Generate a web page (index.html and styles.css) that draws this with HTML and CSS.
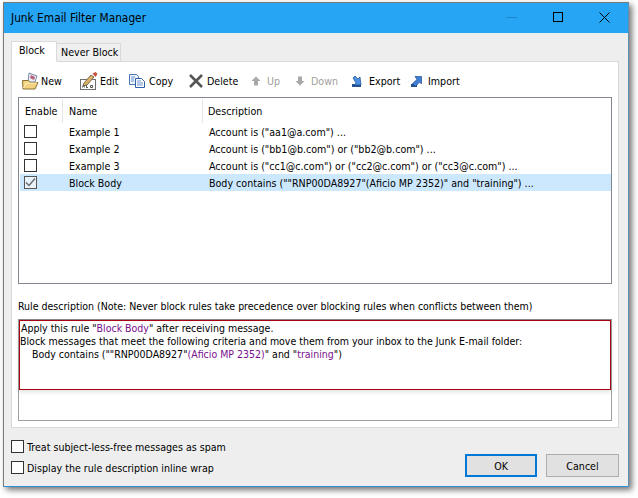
FILE: index.html
```html
<!DOCTYPE html>
<html>
<head>
<meta charset="utf-8">
<title>Junk Email Filter Manager</title>
<link rel="stylesheet" href="styles.css">
</head>
<body>
<div class="window">
  <div class="titlebar">
    <span class="title">Junk Email Filter Manager</span>
    <div class="controls">
      <svg class="ctl ctl-min" width="11" height="11" viewBox="0 0 11 11"><path d="M0 5.500h11" stroke="#1d86c9" stroke-width="1"/></svg>
      <svg class="ctl ctl-max" width="11" height="11" viewBox="0 0 11 11"><rect x=".5" y=".5" width="9" height="9" fill="none" stroke="#000"/></svg>
      <svg class="ctl ctl-close" width="11" height="11" viewBox="0 0 11 11"><path d="M.5.5l10 10M10.500.5l-10 10" stroke="#000" fill="none"/></svg>
    </div>
  </div>
  <div class="client">
    <div class="tabs">
      <div class="tab tab-active">Block</div>
      <div class="tab">Never Block</div>
    </div>
    <div class="panel">
      <div class="toolbar">
        <div class="tool tool-new">
          <svg width="20" height="20" viewBox="0 0 20 20"><path d="M8 2l8 3-2 6H7z" fill="#e9eef7" stroke="#7d8aa6"/><path d="M10 4l4 2-1 3-4-2z" fill="#b9607a"/><path d="M1.500 9.500h6l1.500 2h8l-3 6.500h-12z" fill="#f2d27e" stroke="#8a7234"/><path d="M2.500 17l2.500-5h11" fill="none" stroke="#fff0c0"/></svg>
          <span>New</span>
        </div>
        <div class="tool tool-edit">
          <svg width="20" height="20" viewBox="0 0 20 20"><rect x=".5" y="8.500" width="15" height="10" fill="#fff" stroke="#6f6f6f"/><path d="M4 12l7-8 3 2-7 8-4 1z" fill="#d8b26a" stroke="#80694a"/><path d="M12.500 2.500l3-1.500 2 2-2 3z" fill="#c8503c"/><path d="M2.500 16.500l1-2.500 1 2.500M6.500 14v2.500h1.500M10.500 14.500h2v2h-2z" stroke="#555" fill="none"/></svg>
          <span>Edit</span>
        </div>
        <div class="tool tool-copy">
          <svg width="16" height="16" viewBox="0 0 16 16"><path d="M.5 1.500h7l2 2v8h-9z" fill="#eef3fb" stroke="#4a76b8"/><path d="M6.500 5.500h6l3 3v6h-9z" fill="#fff" stroke="#2e5fa8"/><path d="M2 4h4M2 6h3M2 8h3M8 8h4M8 10h6M8 12h6" stroke="#6b93cf"/></svg>
          <span>Copy</span>
        </div>
        <div class="tool tool-delete">
          <svg width="14" height="14" viewBox="0 0 14 14"><path d="M1 1l12 12M13 1L1 13" stroke="#555" stroke-width="2.600" fill="none"/></svg>
          <span>Delete</span>
        </div>
        <div class="tool tool-up is-disabled">
          <svg width="10" height="10" viewBox="0 0 10 10"><path d="M5 .5l4.500 4.500H7v4.500H3V5H.5z" fill="#a8a8a8"/></svg>
          <span>Up</span>
        </div>
        <div class="tool tool-down is-disabled">
          <svg width="10" height="10" viewBox="0 0 10 10"><path d="M5 9.500L.5 5H3V.5h4V5h2.500z" fill="#a8a8a8"/></svg>
          <span>Down</span>
        </div>
        <div class="tool tool-export">
          <svg width="11" height="11" viewBox="0 0 11 11"><path d="M0 8h9v3H0z" fill="#24508f"/><path d="M1 2l2-2 3 3 2-2 1 8H2l2-2z" fill="#4d8fe0" stroke="#1d4a8c" stroke-width=".7"/></svg>
          <span>Export</span>
        </div>
        <div class="tool tool-import">
          <svg width="11" height="11" viewBox="0 0 11 11"><path d="M0 8h6v3H0z" fill="#24508f"/><path d="M10.500.5V8l-2-2-4 4.500-3-3L6 3.500l-2-3z" fill="#3f7fd6" stroke="#1d4a8c" stroke-width=".7"/></svg>
          <span>Import</span>
        </div>
      </div>

      <div class="list">
        <div class="list-head">
          <div class="col col-enable">Enable</div>
          <div class="col col-name">Name</div>
          <div class="col col-desc">Description</div>
        </div>
        <div class="row">
          <div class="cell-check"><span class="check"></span></div>
          <div class="cell-name">Example 1</div>
          <div class="cell-desc">Account is ("aa1@a.com") ...</div>
        </div>
        <div class="row">
          <div class="cell-check"><span class="check"></span></div>
          <div class="cell-name">Example 2</div>
          <div class="cell-desc">Account is ("bb1@b.com") or ("bb2@b.com") ...</div>
        </div>
        <div class="row">
          <div class="cell-check"><span class="check"></span></div>
          <div class="cell-name">Example 3</div>
          <div class="cell-desc">Account is ("cc1@c.com") or ("cc2@c.com") or ("cc3@c.com") ...</div>
        </div>
        <div class="row row-selected">
          <div class="cell-check"><span class="check check-on"><svg width="11" height="11" viewBox="0 0 11 11"><path d="M1 5.500l3 3 6-7" fill="none" stroke="#666" stroke-width="1.300"/></svg></span></div>
          <div class="cell-name">Block Body</div>
          <div class="cell-desc">Body contains (""RNP00DA8927"(Aficio MP 2352)" and "training") ...</div>
        </div>
      </div>

      <div class="rule-label">Rule description (Note: Never block rules take precedence over blocking rules when conflicts between them)</div>

      <div class="rule-box">
        <div class="rule-text">
          <div class="rule-line rule-first">Apply this rule "<span class="hl">Block Body</span>" after receiving message.</div>
          <div class="rule-line">Block messages that meet the following criteria and move them from your inbox to the Junk E-mail folder:</div>
          <div class="rule-line rule-indent">Body contains (""RNP00DA8927"<span class="hl">(Aficio MP 2352)</span>" and "<span class="hl">training</span>")</div>
        </div>
      </div>
    </div>

    <div class="footer">
      <div class="options">
        <label class="option"><span class="check"></span>Treat subject-less-free messages as spam</label>
        <label class="option"><span class="check"></span>Display the rule description inline wrap</label>
      </div>
      <div class="buttons">
        <button class="btn btn-default">OK</button>
        <button class="btn">Cancel</button>
      </div>
    </div>
  </div>
</div>
</body>
</html>
```
FILE: styles.css
```css
* { box-sizing: border-box; }
html, body { margin: 0; padding: 0; background: #fff; }
body {
  padding: 2px 0 0 3px;
  width: 638px;
  height: 498px;
  overflow: hidden;
  font-family: "DejaVu Sans Condensed", "DejaVu Sans", sans-serif;
  font-size: 10.6px;
  color: #000;
}
.window {
  width: 626px;
  height: 485px;
  border: 1px solid #7a7a7a;
  border-right-color: #5f8fb0;
  border-bottom: 1px solid #2a8fd8;
  background: #eeeeee;
  box-shadow: 3px 3px 6px rgba(0, 0, 0, .55);
  display: flex;
  flex-direction: column;
}
.titlebar {
  height: 30px;
  flex: none;
  background: #26a5f4;
  display: flex;
  align-items: center;
  justify-content: space-between;
  padding-left: 7px;
}
.title { font-size: 11.8px; color: #000; }
.controls { display: flex; height: 30px; align-items: center; }
.ctl { display: block; margin-top: -2px; }
.ctl-min { margin-right: 36px; }
.ctl-max { margin-right: 35px; }
.ctl-close { margin-right: 18px; }
.client {
  flex: 1;
  padding: 8px 9px 0 7px;
  display: flex;
  flex-direction: column;
}
.tabs {
  display: flex;
  align-items: flex-end;
  height: 21px;
  position: relative;
  z-index: 1;
  margin-bottom: -1px;
}
.tab {
  height: 19px;
  padding: 0 0 0 4px;
  width: 64px;
  border: 1px solid #d9d9d9;
  border-left: 0;
  background: #f0f0f0;
  line-height: 17px;
  white-space: nowrap;
}
.tab-active {
  height: 21px;
  width: 46px;
  border-left: 1px solid #d9d9d9;
  border-bottom: 1px solid #fff;
  background: #fff;
  padding: 0 0 0 7px;
}
.panel {
  height: 367px;
  flex: none;
  border: 1px solid #d9d9d9;
  background: #fff;
  padding: 8px 6px 0 6px;
}
.toolbar {
  height: 22px;
  display: flex;
  align-items: center;
  margin-bottom: 5px;
}
.tool {
  display: flex;
  align-items: center;
  white-space: nowrap;
}
.tool svg { display: block; flex: none; }
.tool-new { margin-left: 3px; width: 59px; gap: 0; }
.tool-edit { width: 49px; gap: 0; }
.tool-copy { width: 60px; gap: 4px; }
.tool-delete { width: 62px; gap: 4px; }
.tool-up { width: 44px; gap: 6px; }
.tool-down { width: 57px; gap: 6px; }
.tool-export { width: 59px; gap: 6px; }
.tool-import { gap: 6px; }
.is-disabled { color: #a0a0a0; }
.list {
  width: 594px;
  height: 187px;
  border: 1px solid #828790;
  background: #fff;
}
.list-head {
  display: flex;
  height: 25px;
  align-items: stretch;
  padding-top: 1px;
}
.col {
  border-right: 1px solid #e5e5e5;
  line-height: 24px;
  padding-left: 6px;
  height: 24px;
}
.col-enable { width: 44px; }
.col-name { width: 140px; }
.col-desc { flex: 1; padding-left: 5px; border-right: 0; }
.row {
  display: flex;
  height: 17px;
  align-items: center;
}
.row-selected { background: #cce8ff; margin-left: 1px; }
.row-selected .cell-check { width: 49px; padding-left: 4px; }
.cell-check { width: 50px; padding-left: 5px; display: flex; }
.cell-name { width: 140px; }
.cell-desc { flex: 1; white-space: nowrap; }
.check {
  display: flex;
  align-items: center;
  justify-content: center;
  width: 13px;
  height: 13px;
  border: 1px solid #333;
  background: #fff;
  flex: none;
}
.check-on { border-color: #555; background: #e8f3fb; }
.rule-label {
  margin-top: 14px;
  height: 21px;
  line-height: 17px;
  font-size: 10.5px;
  white-space: nowrap;
}
.rule-box {
  width: 594px;
  height: 102px;
  border: 1px solid #a0a0a0;
  border-top-color: #8a8a8a;
  background: #fff;
}
.rule-text {
  width: 592px;
  height: 70px;
  border: 1px solid #a80012;
  padding: 1px 0 0 0;
  font-size: 10.5px;
  box-shadow: 0 2px 4px rgba(0, 0, 0, .12);
}
.rule-line { height: 13px; line-height: 13px; white-space: nowrap; }
.rule-first { padding-left: 1px; }
.rule-indent { padding-left: 12px; }
.hl { color: #7a0f8e; }
.footer {
  flex: 1;
  display: flex;
  justify-content: space-between;
  padding-top: 12px;
}
.options {
  display: flex;
  flex-direction: column;
  gap: 8px;
}
.option {
  display: flex;
  align-items: center;
  gap: 3px;
  height: 13px;
  white-space: nowrap;
}
.buttons {
  display: flex;
  gap: 9px;
  padding-top: 14px;
}
.btn {
  width: 73px;
  height: 23px;
  background: #e1e1e1;
  border: 1px solid #adadad;
  font: inherit;
  color: #000;
  padding: 0;
  margin: 0;
}
.btn-default { border: 2px solid #0078d7; width: 72px; }
```
